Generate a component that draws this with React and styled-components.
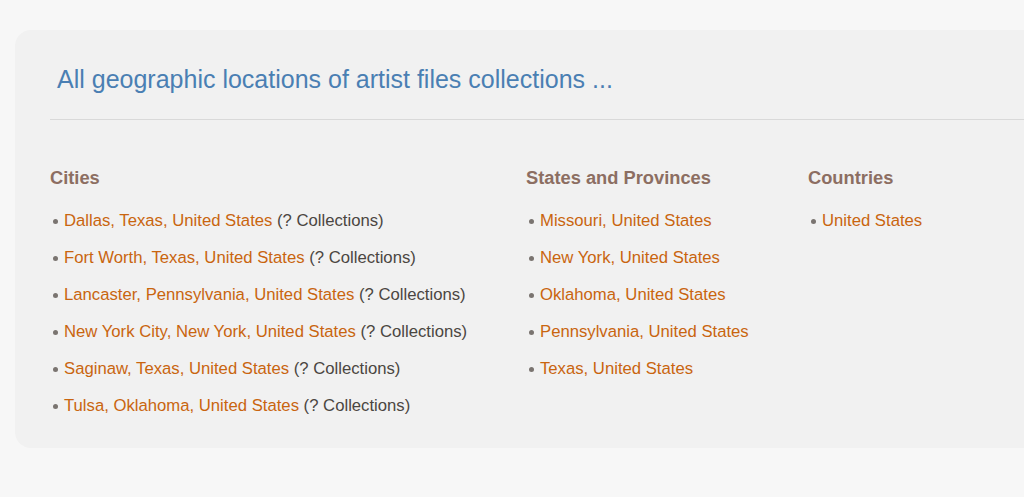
import styled, { createGlobalStyle } from "styled-components";

const GlobalStyle = createGlobalStyle`
    body {
        margin: 0;
        background: #f7f7f7;
        font-family: "Liberation Sans", Arial, sans-serif;
    }
`

const Page = styled.div`
    padding: 30px 0 50px 15px;
    overflow: hidden;
`

const Card = styled.section`
    background: #f1f1f1;
    border-radius: 16px 0 0 16px;
    padding: 0 0 16px 35px;
`

const Title = styled.h2`
    margin: 0;
    padding: 33px 0 24px 7px;
    font-size: 25px;
    font-weight: normal;
    line-height: 32px;
    color: #4a7fb3;
    border-bottom: 1px solid #d9d9d9;
`

const Columns = styled.div`
    display: grid;
    grid-template-columns: 476px 282px 1fr;
    padding-top: 47px;
`

const Heading = styled.h3`
    margin: 0 0 21px 0;
    font-size: 18.3px;
    line-height: 22px;
    font-weight: bold;
    color: #8c6e62;
`

const List = styled.ul`
    list-style: none;
    margin: 0;
    padding: 0 0 0 14px;
`

const Item = styled.li`
    position: relative;
    font-size: 16.7px;
    line-height: 22px;
    margin-bottom: 15px;
    color: #4b4641;
    &::before {
        content: "";
        position: absolute;
        left: -11px;
        top: 9px;
        width: 5px;
        height: 5px;
        border-radius: 50%;
        background: #7a7470;
    }
`

const Place = styled.a`
    color: #c9650f;
    text-decoration: none;
`

const cities = [
    "Dallas, Texas, United States",
    "Fort Worth, Texas, United States",
    "Lancaster, Pennsylvania, United States",
    "New York City, New York, United States",
    "Saginaw, Texas, United States",
    "Tulsa, Oklahoma, United States",
]

const states = [
    "Missouri, United States",
    "New York, United States",
    "Oklahoma, United States",
    "Pennsylvania, United States",
    "Texas, United States",
]

const countries = ["United States"]

function Column({ title, places, counts }) {
    return (
        <div>
            <Heading>{title}</Heading>
            <List>
                {places.map((p) => (
                    <Item key={p}>
                        <Place href="#">{p}</Place>
                        {counts && " (? Collections)"}
                    </Item>
                ))}
            </List>
        </div>
    )
}

export default function App() {
    return (
        <>
            <GlobalStyle />
            <Page>
                <Card>
                    <Title>All geographic locations of artist files collections ...</Title>
                    <Columns>
                        <Column title="Cities" places={cities} counts />
                        <Column title="States and Provinces" places={states} />
                        <Column title="Countries" places={countries} />
                    </Columns>
                </Card>
            </Page>
        </>
    )
}
